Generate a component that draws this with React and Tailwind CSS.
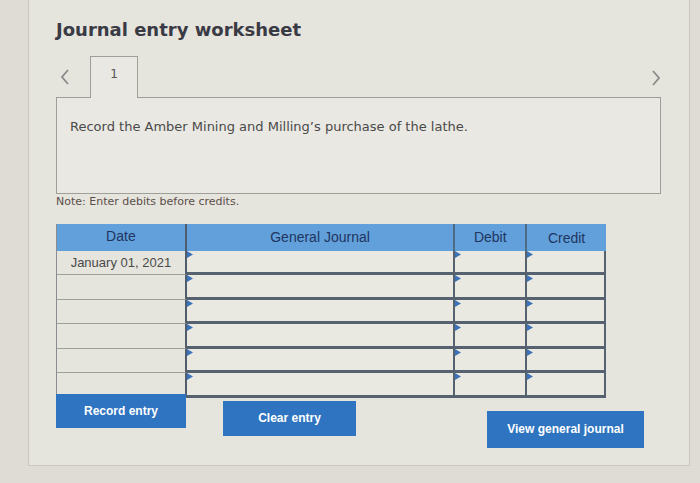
import React from "react";

const Flag = () => (
  <svg width="6" height="7" viewBox="0 0 6 7" className="absolute left-0 top-0">
    <path d="M0 0 L6 3.5 L0 7 Z" fill="#3c72b8" />
  </svg>
);

function Row({ date }) {
  return (
    <div className="flex h-[24.5px]">
      <div className="w-[130px] border-b border-[#9ea0a0] border-r-2 border-r-[#4f5d6c] flex items-center justify-center text-[13px] text-[#4a4a4a]" style={{ fontFamily: '"Liberation Sans", Arial, sans-serif' }}>
        {date}
      </div>
      <div className="relative w-[267px] border-b-[3px] border-[#56626f] bg-[#e9e9e2]"><Flag /></div>
      <div className="relative w-[72px] border-l-2 border-b-[3px] border-[#56626f] bg-[#e9e9e2]"><Flag /></div>
      <div className="relative w-[81px] border-l-2 border-r-2 border-b-[3px] border-[#56626f] bg-[#e9e9e2]"><Flag /></div>
    </div>
  );
}

export default function App() {
  const sans = { fontFamily: '"DejaVu Sans", Verdana, sans-serif' };
  const arial = { fontFamily: '"Liberation Sans", Arial, sans-serif' };
  return (
    <div className="w-[700px] h-[483px] bg-[#dedcd4] overflow-hidden flex">
      <div className="ml-[28px] w-[662px] h-[466px] bg-[#e5e4dd] border-l border-r border-b border-[#c9c8c0] pl-[27px] pr-[10px] pt-[17px] flex flex-col" style={sans}>
        <div className="text-[18px] font-bold text-[#3a3a44] leading-[26px]">Journal entry worksheet</div>
        <div className="flex items-end mt-[13px] h-[41px] relative">
          <div className="w-[34px] h-full flex items-center pl-[4px]">
            <svg width="10" height="16" viewBox="0 0 10 16"><path d="M8 1 L2 8 L8 15" fill="none" stroke="#8a8a8a" strokeWidth="1.8" /></svg>
          </div>
          <div className="w-[48px] h-[42px] border border-b-0 border-[#9f9f9a] bg-[#e9e8e2] -mb-px relative z-10 flex justify-center pt-[8px] text-[12px] text-[#555]">1</div>
          <div className="flex-1" />
          <div className="h-full flex items-start pt-[14px] pr-[18px]">
            <svg width="10" height="16" viewBox="0 0 10 16"><path d="M2 1 L8 8 L2 15" fill="none" stroke="#8a8a8a" strokeWidth="1.8" /></svg>
          </div>
        </div>
        <div className="w-[605px] h-[97px] border border-[#9f9f9a] bg-[#e9e8e2] pl-[13px] pt-[19px] text-[13px] text-[#4a4a4a]">
          Record the Amber Mining and Milling’s purchase of the lathe.
        </div>
        <div className="mt-0 text-[11px] text-[#5b4f4a]">Note: Enter debits before credits.</div>
        <div className="mt-[13px] w-[550px] border-l border-[#8a8e92]" style={arial}>
          <div className="flex h-[27px] bg-[#62a0db] text-[14px] text-[#1f3560]">
            <div className="w-[130px] flex justify-center pt-[2px] border-r-2 border-[#4f5d6c]">Date</div>
            <div className="w-[267px] flex justify-center items-center">General Journal</div>
            <div className="w-[72px] flex justify-center items-center border-l-2 border-[#4f6a86]">Debit</div>
            <div className="w-[81px] flex justify-center items-center border-l-2 border-[#4f6a86] pt-[3px]">Credit</div>
          </div>
          <Row date="January 01, 2021" />
          <Row />
          <Row />
          <Row />
          <Row />
          <Row />
        </div>
        <div className="flex items-start text-[12px] font-bold text-white" style={arial}>
          <div className="mt-[-4px] w-[130px] h-[34px] bg-[#2f74c0] flex items-center justify-center">Record entry</div>
          <div className="ml-[37px] mt-[3px] w-[133px] h-[35px] bg-[#2f74c0] flex items-center justify-center">Clear entry</div>
          <div className="ml-[131px] mt-[13px] w-[157px] h-[37px] bg-[#2f74c0] flex items-center justify-center">View general journal</div>
        </div>
      </div>
    </div>
  );
}
